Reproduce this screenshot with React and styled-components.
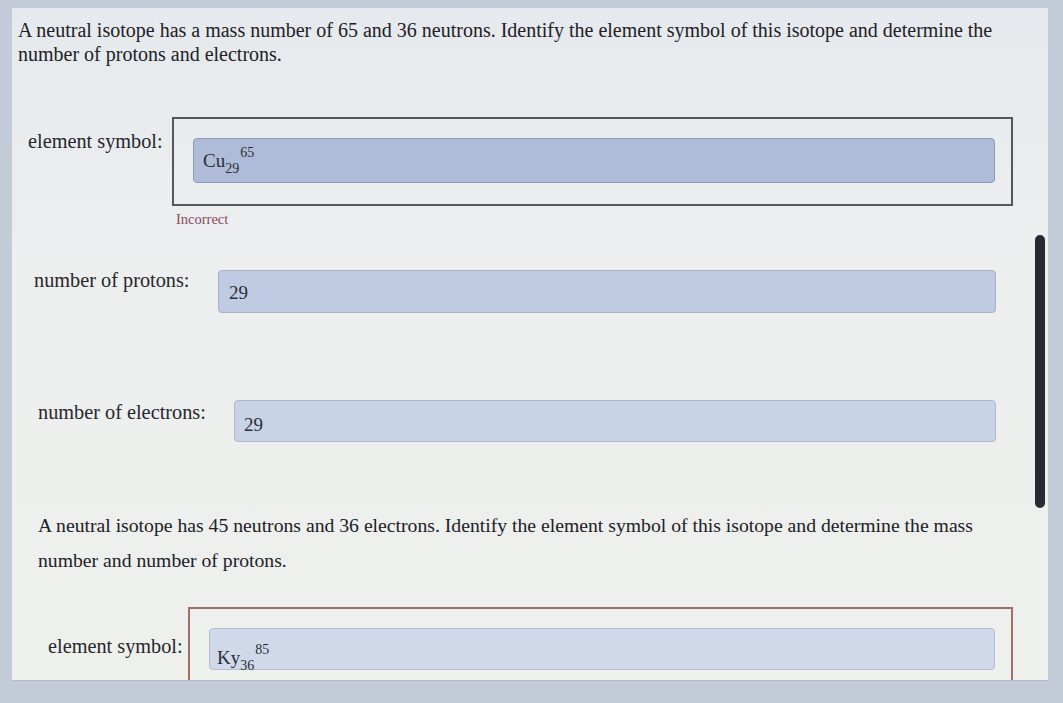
import React from "react";
import styled, { createGlobalStyle } from "styled-components";

const GlobalStyle = createGlobalStyle`
  html, body {
    margin: 0;
    padding: 0;
    background: #c4cbd8;
  }
  body {
    font-family: "Liberation Serif", "Times New Roman", serif;
    color: #23242a;
  }
`;

const Page = styled.div`
  height: 703px;
  overflow: hidden;
  padding: 8px 15px 0 12px;
  box-sizing: border-box;
`;

const Panel = styled.div`
  position: relative;
  height: 672px;
  overflow: hidden;
  background: linear-gradient(180deg, #e6e9ed 0%, #edefef 40%, #eef0ec 100%);
  box-shadow: 0 1px 0 #b6bcc6;
`;

const Scrollbar = styled.div`
  position: absolute;
  left: 1023px;
  top: 227px;
  width: 10px;
  height: 273px;
  border-radius: 5px;
  background: #272a35;
`;

const Question = styled.p`
  margin: ${(p) => p.$margin};
  font-size: ${(p) => p.$size}px;
  line-height: ${(p) => p.$lineHeight}px;
  color: #202127;
  width: ${(p) => p.$width}px;
`;

const Row = styled.div`
  display: flex;
  align-items: flex-start;
  margin: ${(p) => p.$margin};
`;

const Label = styled.div`
  width: ${(p) => p.$width}px;
  flex-shrink: 0;
  padding-top: ${(p) => p.$top}px;
  font-size: 20.3px;
  line-height: 24px;
  white-space: nowrap;
  color: #26272d;
`;

const AnswerBox = styled.div`
  width: ${(p) => p.$width}px;
  height: ${(p) => p.$height}px;
  box-sizing: border-box;
  border: 2px solid ${(p) => p.$border};
  border-bottom-width: ${(p) => (p.$open ? 0 : 2)}px;
  padding: 19px 16px 0 19px;
`;

const Field = styled.div`
  width: ${(p) => p.$width}px;
  height: ${(p) => p.$height}px;
  margin-top: ${(p) => p.$top || 0}px;
  box-sizing: border-box;
  border: 1px solid ${(p) => p.$border};
  border-radius: 4px;
  background: ${(p) => p.$fill};
  padding: ${(p) => p.$pad};
  font-size: 19px;
  line-height: 20px;
  color: #2b2d36;
  white-space: nowrap;
`;

const Sub = styled.sub`
  font-size: 14px;
  vertical-align: -6px;
  line-height: 0;
`;

const Sup = styled.sup`
  font-size: 14px;
  vertical-align: 10px;
  line-height: 0;
  margin-left: 1px;
`;

const Feedback = styled.div`
  margin: 5px 0 0 164px;
  font-size: 14.5px;
  line-height: 16px;
  color: #8b4a5c;
`;

function Isotope({ symbol, z, a }) {
  return (
    <span>
      {symbol}
      <Sub>{z}</Sub>
      <Sup>{a}</Sup>
    </span>
  );
}

export default function App() {
  return (
    <>
      <GlobalStyle />
      <Page>
        <Panel>
          <Question $margin="10px 0 0 6px" $size={20} $lineHeight={24} $width={1000}>
            A neutral isotope has a mass number of 65 and 36 neutrons. Identify the element
            symbol of this isotope and determine the number of protons and electrons.
          </Question>

          <Row $margin="51px 0 0 16px">
            <Label $width={144} $top={12}>element symbol:</Label>
            <AnswerBox $width={841} $height={89} $border="#55575c">
              <Field $width={802} $height={45} $fill="#aebcd9" $border="#8e9ab4" $pad="12px 0 0 9px">
                <Isotope symbol="Cu" z="29" a="65" />
              </Field>
            </AnswerBox>
          </Row>
          <Feedback>Incorrect</Feedback>

          <Row $margin="41px 0 0 22px">
            <Label $width={184} $top={0}>number of protons:</Label>
            <Field $width={778} $height={43} $top={2} $fill="#bfcbe2" $border="#a7b1c7" $pad="12px 0 0 10px">
              29
            </Field>
          </Row>

          <Row $margin="87px 0 0 26px">
            <Label $width={196} $top={0}>number of electrons:</Label>
            <Field $width={762} $height={42} $fill="#c8d3e7" $border="#adb8cc" $pad="14px 0 0 9px">
              29
            </Field>
          </Row>

          <Question $margin="66px 0 0 26px" $size={19.7} $lineHeight={35} $width={950}>
            A neutral isotope has 45 neutrons and 36 electrons. Identify the element symbol of
            this isotope and determine the mass number and number of protons.
          </Question>

          <Row $margin="29px 0 0 36px">
            <Label $width={140} $top={27}>element symbol:</Label>
            <AnswerBox $width={825} $height={80} $border="#a56a6a" $open>
              <Field $width={786} $height={42} $fill="#cfd9e9" $border="#b3bdd0" $pad="19px 0 0 7px">
                <Isotope symbol="Ky" z="36" a="85" />
              </Field>
            </AnswerBox>
          </Row>

          <Scrollbar />
        </Panel>
      </Page>
    </>
  );
}
